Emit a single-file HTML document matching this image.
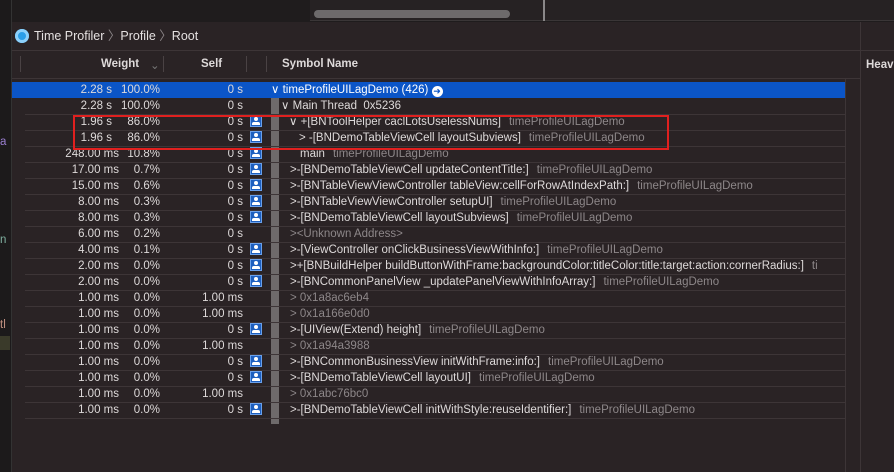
<!DOCTYPE html><html><head><style>
body{margin:0;width:894px;height:472px;background:#2a2325;font-family:"Liberation Sans",sans-serif;font-size:11.5px;color:#dedada;overflow:hidden;position:relative}
.a{position:absolute;white-space:nowrap}
.row{position:absolute;left:25px;width:820px;height:16px;border-bottom:1px solid #3d3537}
.r{position:absolute;text-align:right;line-height:16px;white-space:nowrap}
.s{position:absolute;line-height:16px;white-space:pre}
.g{color:#8d8789}
.ic{position:absolute;left:225px;top:1px;width:12px;height:12px;background:#1d5fbf;border:1px solid #6aa0ea;box-sizing:border-box}
.ic:before{content:"";position:absolute;left:3px;top:1px;width:4px;height:4px;border-radius:50%;background:#fff}
.ic:after{content:"";position:absolute;left:1px;top:6px;width:8px;height:3px;background:#fff;border-radius:2px 2px 0 0}
</style></head><body>
<div class="a" style="left:0;top:0;width:894px;height:22px;background:#1f1c1d"></div>
<div class="a" style="left:310px;top:0;width:584px;height:20px;background:#262223;border-bottom:1px solid #3a3637"></div>
<div class="a" style="left:314px;top:10px;width:196px;height:8px;border-radius:4px;background:#6d6a6b"></div>
<div class="a" style="left:543px;top:0;width:2px;height:21px;background:#8a8889"></div>
<div class="a" style="left:0;top:0;width:11px;height:472px;background:#1c1a1b;border-right:1px solid #333"></div>
<div class="a" style="left:0;top:136px;color:#9a7fd0">a</div>
<div class="a" style="left:0;top:234px;color:#7fb0a0">n</div>
<div class="a" style="left:0;top:319px;color:#c09080">tl</div>
<div class="a" style="left:0;top:336px;width:10px;height:14px;background:#3a3a2a"></div>
<div class="a" style="left:15px;top:29px;width:14px;height:14px;border-radius:50%;background:#2a9ee8;box-shadow:inset 0 0 0 3px #8cd0fa"></div>
<div class="a" style="left:34px;top:29px;font-size:12.5px;line-height:15px;color:#e4e0e0">Time Profiler <span class="g">〉</span>Profile <span class="g">〉</span>Root</div>
<div class="a" style="left:12px;top:50px;width:882px;height:1px;background:#3d3537"></div>
<div class="a" style="left:20px;top:56px;width:1px;height:16px;background:#4a4244"></div>
<div class="a" style="left:163px;top:56px;width:1px;height:16px;background:#4a4244"></div>
<div class="a" style="left:246px;top:56px;width:1px;height:16px;background:#4a4244"></div>
<div class="a" style="left:266px;top:56px;width:1px;height:16px;background:#4a4244"></div>
<div class="a" style="left:101px;top:58px;font-weight:bold">Weight</div>
<div class="a" style="left:150px;top:58px;color:#777">⌄</div>
<div class="a" style="left:201px;top:58px;font-weight:bold">Self</div>
<div class="a" style="left:282px;top:58px;font-weight:bold">Symbol Name</div>
<div class="a" style="left:860px;top:22px;width:1px;height:450px;background:#3d3537"></div>
<div class="a" style="left:866px;top:59px;font-weight:bold">Heavi</div>
<div class="a" style="left:12px;top:78px;width:848px;height:1px;background:#3d3537"></div>
<div class="a" style="left:845px;top:79px;width:1px;height:393px;background:#3d3537"></div>
<div class="a" style="left:271px;top:98px;width:8px;height:326px;background:#6e6a6b"></div>
<div class="a" style="left:12px;top:82px;width:833px;height:16px;background:#0b55c7"></div>
<div id="t"></div>
<div class="a" style="left:73px;top:115px;width:592px;height:31px;border:2px solid #e0201f"></div>
<script>
var d=[["2.28 s","100.0%","0 s",0,"∨ timeProfileUILagDemo (426)","",1,246],
["2.28 s","100.0%","0 s",0,"∨ Main Thread  0x5236","",0,256],
["1.96 s","86.0%","0 s",1,"∨ +[BNToolHelper caclLotsUselessNums]","timeProfileUILagDemo",0,264],
["1.96 s","86.0%","0 s",1,"> -[BNDemoTableViewCell layoutSubviews]","timeProfileUILagDemo",0,274],
["248.00 ms","10.8%","0 s",1,"main","timeProfileUILagDemo",0,275],
["17.00 ms","0.7%","0 s",1,">-[BNDemoTableViewCell updateContentTitle:]","timeProfileUILagDemo"],
["15.00 ms","0.6%","0 s",1,">-[BNTableViewViewController tableView:cellForRowAtIndexPath:]","timeProfileUILagDemo"],
["8.00 ms","0.3%","0 s",1,">-[BNTableViewViewController setupUI]","timeProfileUILagDemo"],
["8.00 ms","0.3%","0 s",1,">-[BNDemoTableViewCell layoutSubviews]","timeProfileUILagDemo"],
["6.00 ms","0.2%","0 s",0,"",">&lt;Unknown Address&gt;"],
["4.00 ms","0.1%","0 s",1,">-[ViewController onClickBusinessViewWithInfo:]","timeProfileUILagDemo"],
["2.00 ms","0.0%","0 s",1,">+[BNBuildHelper buildButtonWithFrame:backgroundColor:titleColor:title:target:action:cornerRadius:]","ti"],
["2.00 ms","0.0%","0 s",1,">-[BNCommonPanelView _updatePanelViewWithInfoArray:]","timeProfileUILagDemo"],
["1.00 ms","0.0%","1.00 ms",0,"","> 0x1a8ac6eb4"],
["1.00 ms","0.0%","1.00 ms",0,"","> 0x1a166e0d0"],
["1.00 ms","0.0%","0 s",1,">-[UIView(Extend) height]","timeProfileUILagDemo"],
["1.00 ms","0.0%","1.00 ms",0,"","> 0x1a94a3988"],
["1.00 ms","0.0%","0 s",1,">-[BNCommonBusinessView initWithFrame:info:]","timeProfileUILagDemo"],
["1.00 ms","0.0%","0 s",1,">-[BNDemoTableViewCell layoutUI]","timeProfileUILagDemo"],
["1.00 ms","0.0%","1.00 ms",0,"","> 0x1abc76bc0"],
["1.00 ms","0.0%","0 s",1,">-[BNDemoTableViewCell initWithStyle:reuseIdentifier:]","timeProfileUILagDemo"]];
var h="";d.forEach(function(r,i){var y=82+i*16;var wr=/ms$/.test(r[0])?726:733;
h+='<div class="row" style="top:'+y+'px;'+(i==0?'border:none;':'')+'">'
+'<div class="r" style="right:'+wr+'px">'+r[0]+'</div><div class="r" style="right:685px">'+r[1]+'</div><div class="r" style="right:602px">'+r[2]+'</div>'
+(r[3]?'<div class="ic"></div>':'')
+'<div class="s" style="left:'+(r[7]||265)+'px'+(i==0?';color:#fff':'')+'">'+r[4]+(r[5]?'<span class="g" style="'+(r[4]?'margin-left:8px':'')+'">'+r[5]+'</span>':'')
+(r[6]?' <span style="display:inline-block;width:11px;height:11px;border-radius:50%;background:#fff;color:#0b55c7;font-size:9px;line-height:11px;text-align:center;vertical-align:-1px">➜</span>':'')+'</div></div>';});
document.getElementById("t").innerHTML=h;
</script>
</body></html>
